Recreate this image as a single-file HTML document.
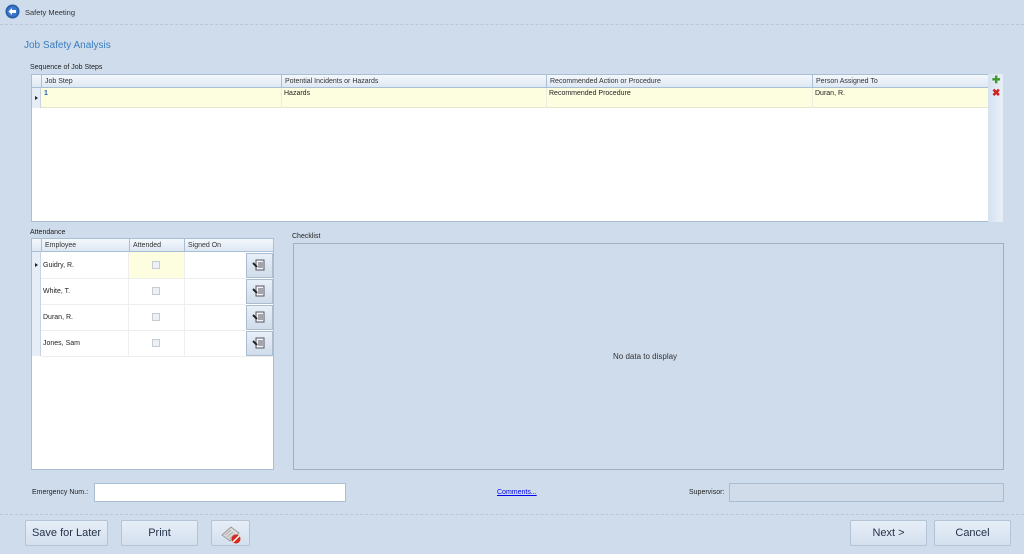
<!DOCTYPE html>
<html><head><style>
*{box-sizing:border-box;margin:0;padding:0}
body{width:1024px;height:550px;background:#cfdcec;font-family:"Liberation Sans",sans-serif;position:relative;overflow:hidden;color:#1e1e1e}
.a{position:absolute}
.s{font-size:7px}
.hd{background:linear-gradient(#f4f8fc,#dde7f3);border-bottom:1px solid #a9bfd6;height:13px}
.hc{position:absolute;top:0;height:13px;border-left:1px solid #a9bfd6;font-size:7px;padding:3px 0 0 3px;color:#333}
.btn{position:absolute;top:520px;height:26px;border:1px solid #b4c4d6;border-radius:2px;background:linear-gradient(#e6eef8,#d4e0ee);font-size:11px;color:#25324a;text-align:center;line-height:24px}
</style></head><body>
<svg class="a" style="left:5px;top:4px" width="15" height="15"><circle cx="7.5" cy="7.5" r="7" fill="#2a5fa8"/><circle cx="7.5" cy="7.5" r="5.3" fill="#3b78c8"/><path d="M3.5 7.5 L7 4 V6 H11 V9 H7 V11 Z" fill="#fff"/></svg>
<div class="a" style="left:25px;top:8px;color:#333;font-size:7.5px">Safety Meeting</div>
<div class="a" style="left:0;top:24px;width:1024px;border-top:1px dashed #b8c8da"></div>
<div class="a" style="left:24px;top:40px;font-size:10px;color:#3a7dbb">Job Safety Analysis</div>
<div class="a s" style="left:30px;top:64px">Sequence of Job Steps</div>
<div class="a" style="left:31px;top:74px;width:958px;height:148px;background:#fff;border:1px solid #a9bfd6">
 <div class="hd" style="position:relative">
  <div class="hc" style="left:9px">Job Step</div>
  <div class="hc" style="left:249px">Potential Incidents or Hazards</div>
  <div class="hc" style="left:514px">Recommended Action or Procedure</div>
  <div class="hc" style="left:780px">Person Assigned To</div>
 </div>
 <div style="position:relative;height:20px;background:#fdfde0;border-bottom:1px solid #e6e6d0">
  <div class="a" style="left:0;top:0;width:9px;height:20px;background:#e6edf6;border-right:1px solid #c8d4e2"></div>
  <div class="a" style="left:3px;top:8px;border-left:3px solid #222;border-top:2px solid transparent;border-bottom:2px solid transparent"></div>
  <div class="a s" style="left:12px;top:2px;color:#1a5fb4;font-weight:bold">1</div>
  <div class="a" style="left:249px;top:0;height:20px;border-left:1px solid #ecece0"></div>
  <div class="a s" style="left:252px;top:2px">Hazards</div>
  <div class="a" style="left:514px;top:0;height:20px;border-left:1px solid #ecece0"></div>
  <div class="a s" style="left:517px;top:2px">Recommended Procedure</div>
  <div class="a" style="left:780px;top:0;height:20px;border-left:1px solid #ecece0"></div>
  <div class="a s" style="left:783px;top:2px">Duran, R.</div>
 </div>
</div>
<div class="a" style="left:988px;top:74px;width:15px;height:148px;background:linear-gradient(90deg,#d6e2f0,#e8eff8)"></div>
<div class="a" style="left:992px;top:76px;color:#3a9a2a;font-size:10px;font-weight:bold;line-height:10px">✚</div>
<div class="a" style="left:992px;top:89px;color:#d02020;font-size:10px;font-weight:bold;line-height:10px">✖</div>
<div class="a s" style="left:30px;top:229px">Attendance</div>
<div class="a" style="left:31px;top:238px;width:243px;height:232px;background:#fff;border:1px solid #a9bfd6">
 <div class="hd" style="position:relative">
  <div class="hc" style="left:9px">Employee</div>
  <div class="hc" style="left:97px">Attended</div>
  <div class="hc" style="left:152px">Signed On</div>
 </div>
</div>
<div class="a" style="left:32px;top:252px;width:9px;height:104px;background:#e6edf6;border-right:1px solid #c8d4e2"></div>
<div class="a" style="left:35px;top:263px;border-left:3px solid #222;border-top:2px solid transparent;border-bottom:2px solid transparent"></div>
<div class="a" style="left:129px;top:252px;width:55px;height:26px;background:#fdfde0"></div>
<div class="a s" style="left:43px;top:262px">Guidry, R.</div>
<div class="a s" style="left:43px;top:288px">White, T.</div>
<div class="a s" style="left:43px;top:314px">Duran, R.</div>
<div class="a s" style="left:43px;top:340px">Jones, Sam</div>
<div class="a" style="left:128px;top:252px;height:104px;border-left:1px solid #eee"></div>
<div class="a" style="left:184px;top:252px;height:104px;border-left:1px solid #eee"></div>
<div class="a" style="left:41px;top:278px;width:205px;border-top:1px solid #eee"></div>
<div class="a" style="left:41px;top:304px;width:205px;border-top:1px solid #eee"></div>
<div class="a" style="left:41px;top:330px;width:205px;border-top:1px solid #eee"></div>
<div class="a" style="left:41px;top:356px;width:232px;border-top:1px solid #eee"></div>
<div class="a" style="left:152px;top:261px;width:8px;height:8px;border:1px solid #c4ccd6;background:#eef0f3"></div>
<div class="a" style="left:152px;top:287px;width:8px;height:8px;border:1px solid #c4ccd6;background:#eef0f3"></div>
<div class="a" style="left:152px;top:313px;width:8px;height:8px;border:1px solid #c4ccd6;background:#eef0f3"></div>
<div class="a" style="left:152px;top:339px;width:8px;height:8px;border:1px solid #c4ccd6;background:#eef0f3"></div>
<div class="a" style="left:246px;top:253px;width:27px;height:25px;background:linear-gradient(#e8eff8,#d0dcea);border:1px solid #aabcd0"></div>
<div class="a" style="left:246px;top:279px;width:27px;height:25px;background:linear-gradient(#e8eff8,#d0dcea);border:1px solid #aabcd0"></div>
<div class="a" style="left:246px;top:305px;width:27px;height:25px;background:linear-gradient(#e8eff8,#d0dcea);border:1px solid #aabcd0"></div>
<div class="a" style="left:246px;top:331px;width:27px;height:25px;background:linear-gradient(#e8eff8,#d0dcea);border:1px solid #aabcd0"></div>
<svg class="a" style="left:252px;top:258px" width="14" height="96"><g id="ic" fill="none" stroke="#556" stroke-width="1"><rect x="4" y="2" width="8" height="10" fill="#f4f4f4"/><path d="M6 5h5M6 7h5M6 9h5"/><path d="M1 5l4 4" stroke="#222" stroke-width="2"/></g><use href="#ic" y="26"/><use href="#ic" y="52"/><use href="#ic" y="78"/></svg>
<div class="a s" style="left:292px;top:233px">Checklist</div>
<div class="a" style="left:293px;top:243px;width:711px;height:227px;border:1px solid #a6aeb8"></div>
<div class="a" style="left:613px;top:352px;font-size:8px;color:#333">No data to display</div>
<div class="a s" style="left:32px;top:489px">Emergency Num.:</div>
<div class="a" style="left:94px;top:483px;width:252px;height:19px;background:#fff;border:1px solid #a9bfd6"></div>
<div class="a s" style="left:497px;top:489px;color:#0000ee;text-decoration:underline">Comments...</div>
<div class="a s" style="left:689px;top:489px">Supervisor:</div>
<div class="a" style="left:729px;top:483px;width:275px;height:19px;background:#d0dcea;border:1px solid #a9bcd0"></div>
<div class="a" style="left:0;top:514px;width:1024px;border-top:1px dashed #b8c8da"></div>
<div class="btn" style="left:25px;width:83px">Save for Later</div>
<div class="btn" style="left:121px;width:77px">Print</div>
<div class="btn" style="left:211px;width:39px"><svg width="24" height="22" style="margin-top:2px"><path d="M3 12 L12 4 L20 10 L11 18 Z" fill="#ddd" stroke="#999"/><path d="M6 12l6-5M8 14l6-5M10 16l6-5" stroke="#aaa"/><circle cx="17" cy="16" r="4.5" fill="#d42a1e"/><path d="M14 19l6-6" stroke="#fff" stroke-width="1.5"/></svg></div>
<div class="btn" style="left:850px;width:77px">Next &gt;</div>
<div class="btn" style="left:934px;width:77px">Cancel</div>
</body></html>
